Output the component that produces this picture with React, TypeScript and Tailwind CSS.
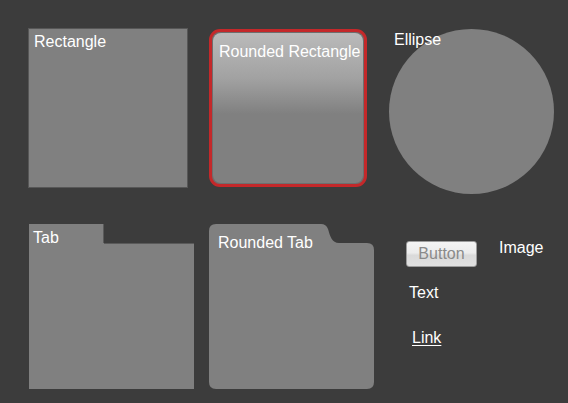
import React from 'react';

// Free canvas of shapes, each placed at its own coordinates.

function RoundedTabShape() {
  return (
    <svg className="absolute inset-0" width="166" height="166" viewBox="0 0 166 166" aria-hidden>
      <path
        d="M7 0 H112 Q117 0 119 5 C121 12 123 19 130 19 H158 Q165 19 165 26 V158 Q165 165 158 165 H7 Q0 165 0 158 V7 Q0 0 7 0 Z"
        fill="#808080"
      />
    </svg>
  );
}

export default function App() {
  const label = 'absolute text-[16px] leading-[18px] text-white whitespace-nowrap';

  return (
    <div
      className="relative h-[403px] w-[568px] overflow-hidden bg-[#3c3c3c]"
      style={{ fontFamily: '"Liberation Sans", Arial, sans-serif' }}
    >
      {/* Rectangle */}
      <div className="absolute left-[28px] top-[28px] h-[160px] w-[160px] border border-[#575757] bg-[#808080]">
        <span className={`${label} left-[5px] top-[4px]`}>Rectangle</span>
      </div>

      {/* Rounded rectangle */}
      <div className="absolute left-[209px] top-[29px] h-[158px] w-[158px] rounded-[11px] border-[3px] border-[#c4282a] bg-[#6e6e6e] p-px">
        <div className="relative h-full w-full rounded-[8px] bg-[linear-gradient(to_bottom,#bababa_0%,#a2a2a2_30%,#808080_54%,#808080_100%)]">
          <span className={`${label} left-[6px] top-[10px]`}>Rounded Rectangle</span>
        </div>
      </div>

      {/* Ellipse */}
      <div className="absolute left-[389px] top-[29px] h-[165px] w-[165px] rounded-full bg-[#808080]" />
      <span className={`${label} left-[394px] top-[31px]`}>Ellipse</span>

      {/* Tab */}
      <div className="absolute left-[29px] top-[224px] flex h-[165px] w-[165px] flex-col">
        <div className="h-[19px] w-[75px] border-r border-[#5a5a5a] bg-[#808080]" />
        <div className="flex-1 bg-[#808080]">
          <div className="ml-[75px] h-px bg-[#5a5a5a]" />
        </div>
        <span className={`${label} left-[4px] top-[5px]`}>Tab</span>
      </div>

      {/* Rounded tab */}
      <div className="absolute left-[209px] top-[224px] h-[166px] w-[166px]">
        <RoundedTabShape />
        <span className={`${label} left-[9px] top-[10px]`}>Rounded Tab</span>
      </div>

      {/* Button */}
      <button
        type="button"
        className="absolute left-[406px] top-[241px] flex h-[26px] w-[71px] items-center justify-center rounded-[3px] border border-[#9c9c9c] bg-[linear-gradient(to_bottom,#f4f4f4_0%,#ececec_45%,#dadada_55%,#e0e0e0_100%)] text-[16px] leading-[18px] text-[#8a8a8a]"
      >
        Button
      </button>

      <span className={`${label} left-[499px] top-[239px]`}>Image</span>
      <span className={`${label} left-[409px] top-[284px]`}>Text</span>
      <a href="#" className={`${label} left-[412px] top-[329px] underline underline-offset-2`}>
        Link
      </a>
    </div>
  );
}
